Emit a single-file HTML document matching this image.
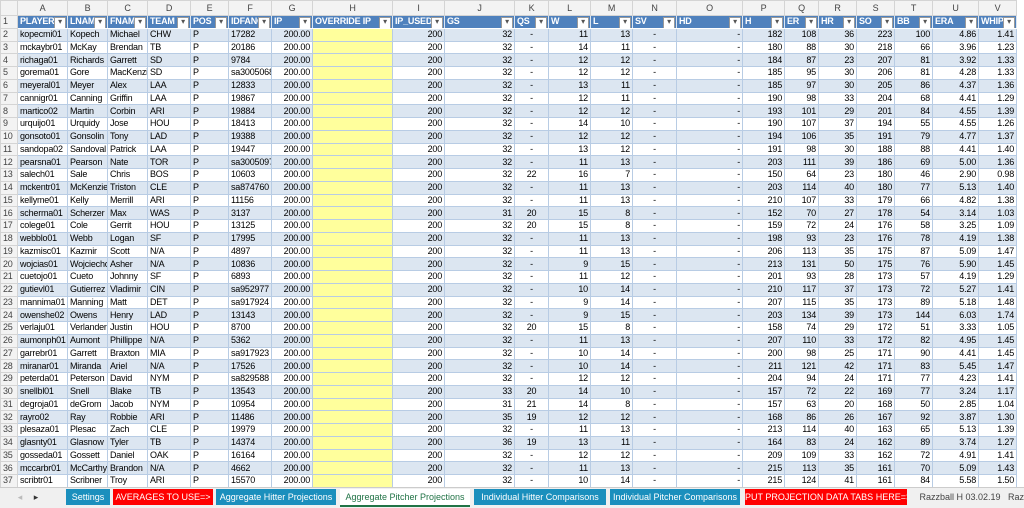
<!DOCTYPE html>
<html><head><meta charset="utf-8"><style>
*{margin:0;padding:0;box-sizing:border-box}
body{width:1024px;height:508px;overflow:hidden;background:#fff;font-family:"Liberation Sans",sans-serif;font-size:9px;color:#000;position:relative}
table{border-collapse:collapse;table-layout:fixed;position:absolute;left:0;top:0;width:1016px}
td,th{height:12.75px;border:1px solid #b8cce4;padding:0 2px;white-space:nowrap;overflow:hidden;line-height:11px;font-weight:normal;letter-spacing:-0.2px}
tr.c th,tr.c td{height:15px;background:#f3f3f3;border-color:#d4d4d4;text-align:center;color:#444}
th{background:#f3f3f3;border-color:#d4d4d4;text-align:left;color:#444;padding-left:2px}
tr.o td{background:#dce6f1}
tr td{background:#fff}
tr.o td{background:#dce6f1}
tr.c td{background:#f3f3f3!important}
tr.h td{background:#4f81bd!important;color:#fff;font-weight:bold;text-align:left;position:relative;border-color:#fff;border-right-color:#dce6f1}
tr.h td::after{content:"▾";position:absolute;right:1px;top:1px;width:10px;height:10px;background:#fff;color:#555;border:1px solid #999;font-size:8px;line-height:8px;text-align:center;font-weight:normal}
td:nth-child(n+8){text-align:right}
td:nth-child(9){background:#ffff9c!important}
tr.h td:nth-child(9){background:#4f81bd!important}
td:nth-child(12),td:nth-child(15){text-align:center}
#tabs{position:absolute;left:0;top:487px;width:1024px;height:21px;background:#f0f0f0;border-top:1px solid #ccc}
.t{position:absolute;top:1px;height:16px;color:#fff;font-size:9px;text-align:center;line-height:16px;white-space:nowrap;overflow:hidden}
.b{background:#1b8fbd}.r{background:#f00}
</style></head><body>
<table>
<colgroup><col style="width:17px"><col style="width:50px"><col style="width:40px"><col style="width:40px"><col style="width:43px"><col style="width:38px"><col style="width:43px"><col style="width:41px"><col style="width:80px"><col style="width:52px"><col style="width:70px"><col style="width:34px"><col style="width:42px"><col style="width:42px"><col style="width:44px"><col style="width:66px"><col style="width:42px"><col style="width:34px"><col style="width:38px"><col style="width:38px"><col style="width:38px"><col style="width:46px"><col style="width:38px"></colgroup>
<tr class="c"><th></th><td>A</td><td>B</td><td>C</td><td>D</td><td>E</td><td>F</td><td>G</td><td>H</td><td>I</td><td>J</td><td>K</td><td>L</td><td>M</td><td>N</td><td>O</td><td>P</td><td>Q</td><td>R</td><td>S</td><td>T</td><td>U</td><td>V</td></tr>
<tr class="h"><th>1</th><td>PLAYERID</td><td>LNAME</td><td>FNAME</td><td>TEAM</td><td>POS</td><td>IDFANG</td><td>IP</td><td>OVERRIDE IP</td><td>IP_USED</td><td>GS</td><td>QS</td><td>W</td><td>L</td><td>SV</td><td>HD</td><td>H</td><td>ER</td><td>HR</td><td>SO</td><td>BB</td><td>ERA</td><td>WHIP</td></tr>
<tr class="o"><th>2<td>kopecmi01<td>Kopech<td>Michael<td>CHW<td>P<td>17282<td>200.00<td><td>200<td>32<td>-<td>11<td>13<td>-<td>-<td>182<td>108<td>36<td>223<td>100<td>4.86<td>1.41</tr>
<tr><th>3<td>mckaybr01<td>McKay<td>Brendan<td>TB<td>P<td>20186<td>200.00<td><td>200<td>32<td>-<td>14<td>11<td>-<td>-<td>180<td>88<td>30<td>218<td>66<td>3.96<td>1.23</tr>
<tr class="o"><th>4<td>richaga01<td>Richards<td>Garrett<td>SD<td>P<td>9784<td>200.00<td><td>200<td>32<td>-<td>12<td>12<td>-<td>-<td>184<td>87<td>23<td>207<td>81<td>3.92<td>1.33</tr>
<tr><th>5<td>gorema01<td>Gore<td>MacKenzie<td>SD<td>P<td>sa3005068<td>200.00<td><td>200<td>32<td>-<td>12<td>12<td>-<td>-<td>185<td>95<td>30<td>206<td>81<td>4.28<td>1.33</tr>
<tr class="o"><th>6<td>meyeral01<td>Meyer<td>Alex<td>LAA<td>P<td>12833<td>200.00<td><td>200<td>32<td>-<td>13<td>11<td>-<td>-<td>185<td>97<td>30<td>205<td>86<td>4.37<td>1.36</tr>
<tr><th>7<td>cannigr01<td>Canning<td>Griffin<td>LAA<td>P<td>19867<td>200.00<td><td>200<td>32<td>-<td>12<td>11<td>-<td>-<td>190<td>98<td>33<td>204<td>68<td>4.41<td>1.29</tr>
<tr class="o"><th>8<td>martico02<td>Martin<td>Corbin<td>ARI<td>P<td>19884<td>200.00<td><td>200<td>32<td>-<td>12<td>12<td>-<td>-<td>193<td>101<td>29<td>201<td>84<td>4.55<td>1.39</tr>
<tr><th>9<td>urquijo01<td>Urquidy<td>Jose<td>HOU<td>P<td>18413<td>200.00<td><td>200<td>32<td>-<td>14<td>10<td>-<td>-<td>190<td>107<td>37<td>194<td>55<td>4.55<td>1.26</tr>
<tr class="o"><th>10<td>gonsoto01<td>Gonsolin<td>Tony<td>LAD<td>P<td>19388<td>200.00<td><td>200<td>32<td>-<td>12<td>12<td>-<td>-<td>194<td>106<td>35<td>191<td>79<td>4.77<td>1.37</tr>
<tr><th>11<td>sandopa02<td>Sandoval<td>Patrick<td>LAA<td>P<td>19447<td>200.00<td><td>200<td>32<td>-<td>13<td>12<td>-<td>-<td>191<td>98<td>30<td>188<td>88<td>4.41<td>1.40</tr>
<tr class="o"><th>12<td>pearsna01<td>Pearson<td>Nate<td>TOR<td>P<td>sa3005097<td>200.00<td><td>200<td>32<td>-<td>11<td>13<td>-<td>-<td>203<td>111<td>39<td>186<td>69<td>5.00<td>1.36</tr>
<tr><th>13<td>salech01<td>Sale<td>Chris<td>BOS<td>P<td>10603<td>200.00<td><td>200<td>32<td>22<td>16<td>7<td>-<td>-<td>150<td>64<td>23<td>180<td>46<td>2.90<td>0.98</tr>
<tr class="o"><th>14<td>mckentr01<td>McKenzie<td>Triston<td>CLE<td>P<td>sa874760<td>200.00<td><td>200<td>32<td>-<td>11<td>13<td>-<td>-<td>203<td>114<td>40<td>180<td>77<td>5.13<td>1.40</tr>
<tr><th>15<td>kellyme01<td>Kelly<td>Merrill<td>ARI<td>P<td>11156<td>200.00<td><td>200<td>32<td>-<td>11<td>13<td>-<td>-<td>210<td>107<td>33<td>179<td>66<td>4.82<td>1.38</tr>
<tr class="o"><th>16<td>scherma01<td>Scherzer<td>Max<td>WAS<td>P<td>3137<td>200.00<td><td>200<td>31<td>20<td>15<td>8<td>-<td>-<td>152<td>70<td>27<td>178<td>54<td>3.14<td>1.03</tr>
<tr><th>17<td>colege01<td>Cole<td>Gerrit<td>HOU<td>P<td>13125<td>200.00<td><td>200<td>32<td>20<td>15<td>8<td>-<td>-<td>159<td>72<td>24<td>176<td>58<td>3.25<td>1.09</tr>
<tr class="o"><th>18<td>webblo01<td>Webb<td>Logan<td>SF<td>P<td>17995<td>200.00<td><td>200<td>32<td>-<td>11<td>13<td>-<td>-<td>198<td>93<td>23<td>176<td>78<td>4.19<td>1.38</tr>
<tr><th>19<td>kazmisc01<td>Kazmir<td>Scott<td>N/A<td>P<td>4897<td>200.00<td><td>200<td>32<td>-<td>11<td>13<td>-<td>-<td>206<td>113<td>35<td>175<td>87<td>5.09<td>1.47</tr>
<tr class="o"><th>20<td>wojcias01<td>Wojciechowski<td>Asher<td>N/A<td>P<td>10836<td>200.00<td><td>200<td>32<td>-<td>9<td>15<td>-<td>-<td>213<td>131<td>50<td>175<td>76<td>5.90<td>1.45</tr>
<tr><th>21<td>cuetojo01<td>Cueto<td>Johnny<td>SF<td>P<td>6893<td>200.00<td><td>200<td>32<td>-<td>11<td>12<td>-<td>-<td>201<td>93<td>28<td>173<td>57<td>4.19<td>1.29</tr>
<tr class="o"><th>22<td>gutievl01<td>Gutierrez<td>Vladimir<td>CIN<td>P<td>sa952977<td>200.00<td><td>200<td>32<td>-<td>10<td>14<td>-<td>-<td>210<td>117<td>37<td>173<td>72<td>5.27<td>1.41</tr>
<tr><th>23<td>mannima01<td>Manning<td>Matt<td>DET<td>P<td>sa917924<td>200.00<td><td>200<td>32<td>-<td>9<td>14<td>-<td>-<td>207<td>115<td>35<td>173<td>89<td>5.18<td>1.48</tr>
<tr class="o"><th>24<td>owenshe02<td>Owens<td>Henry<td>LAD<td>P<td>13143<td>200.00<td><td>200<td>32<td>-<td>9<td>15<td>-<td>-<td>203<td>134<td>39<td>173<td>144<td>6.03<td>1.74</tr>
<tr><th>25<td>verlaju01<td>Verlander<td>Justin<td>HOU<td>P<td>8700<td>200.00<td><td>200<td>32<td>20<td>15<td>8<td>-<td>-<td>158<td>74<td>29<td>172<td>51<td>3.33<td>1.05</tr>
<tr class="o"><th>26<td>aumonph01<td>Aumont<td>Phillippe<td>N/A<td>P<td>5362<td>200.00<td><td>200<td>32<td>-<td>11<td>13<td>-<td>-<td>207<td>110<td>33<td>172<td>82<td>4.95<td>1.45</tr>
<tr><th>27<td>garrebr01<td>Garrett<td>Braxton<td>MIA<td>P<td>sa917923<td>200.00<td><td>200<td>32<td>-<td>10<td>14<td>-<td>-<td>200<td>98<td>25<td>171<td>90<td>4.41<td>1.45</tr>
<tr class="o"><th>28<td>miranar01<td>Miranda<td>Ariel<td>N/A<td>P<td>17526<td>200.00<td><td>200<td>32<td>-<td>10<td>14<td>-<td>-<td>211<td>121<td>42<td>171<td>83<td>5.45<td>1.47</tr>
<tr><th>29<td>peterda01<td>Peterson<td>David<td>NYM<td>P<td>sa829588<td>200.00<td><td>200<td>32<td>-<td>12<td>12<td>-<td>-<td>204<td>94<td>24<td>171<td>77<td>4.23<td>1.41</tr>
<tr class="o"><th>30<td>snellbl01<td>Snell<td>Blake<td>TB<td>P<td>13543<td>200.00<td><td>200<td>33<td>20<td>14<td>10<td>-<td>-<td>157<td>72<td>22<td>169<td>77<td>3.24<td>1.17</tr>
<tr><th>31<td>degroja01<td>deGrom<td>Jacob<td>NYM<td>P<td>10954<td>200.00<td><td>200<td>31<td>21<td>14<td>8<td>-<td>-<td>157<td>63<td>20<td>168<td>50<td>2.85<td>1.04</tr>
<tr class="o"><th>32<td>rayro02<td>Ray<td>Robbie<td>ARI<td>P<td>11486<td>200.00<td><td>200<td>35<td>19<td>12<td>12<td>-<td>-<td>168<td>86<td>26<td>167<td>92<td>3.87<td>1.30</tr>
<tr><th>33<td>plesaza01<td>Plesac<td>Zach<td>CLE<td>P<td>19979<td>200.00<td><td>200<td>32<td>-<td>11<td>13<td>-<td>-<td>213<td>114<td>40<td>163<td>65<td>5.13<td>1.39</tr>
<tr class="o"><th>34<td>glasnty01<td>Glasnow<td>Tyler<td>TB<td>P<td>14374<td>200.00<td><td>200<td>36<td>19<td>13<td>11<td>-<td>-<td>164<td>83<td>24<td>162<td>89<td>3.74<td>1.27</tr>
<tr><th>35<td>gosseda01<td>Gossett<td>Daniel<td>OAK<td>P<td>16164<td>200.00<td><td>200<td>32<td>-<td>12<td>12<td>-<td>-<td>209<td>109<td>33<td>162<td>72<td>4.91<td>1.41</tr>
<tr class="o"><th>36<td>mccarbr01<td>McCarthy<td>Brandon<td>N/A<td>P<td>4662<td>200.00<td><td>200<td>32<td>-<td>11<td>13<td>-<td>-<td>215<td>113<td>35<td>161<td>70<td>5.09<td>1.43</tr>
<tr><th>37<td>scribtr01<td>Scribner<td>Troy<td>ARI<td>P<td>15570<td>200.00<td><td>200<td>32<td>-<td>10<td>14<td>-<td>-<td>215<td>124<td>41<td>161<td>84<td>5.58<td>1.50</tr>
</table>
<div id="tabs">
<div class="t" style="left:14px;width:12px;color:#bbb">◂</div>
<div class="t" style="left:30px;width:12px;color:#333">▸</div>
<div class="t b" style="left:66px;width:44px">Settings</div>
<div class="t r" style="left:113px;width:100px">AVERAGES TO USE=&gt;</div>
<div class="t b" style="left:216px;width:120px">Aggregate Hitter Projections</div>
<div class="t" style="left:340px;width:130px;background:#fff;color:#217346;border-bottom:2px solid #217346;height:18px">Aggregate Pitcher Projections</div>
<div class="t b" style="left:474px;width:132px">Individual Hitter Comparisons</div>
<div class="t b" style="left:610px;width:130px">Individual Pitcher Comparisons</div>
<div class="t r" style="left:745px;width:162px">PUT PROJECTION DATA TABS HERE=&gt;</div>
<div class="t" style="left:912px;width:96px;color:#444">Razzball H 03.02.19</div>
<div class="t" style="left:1008px;width:16px;color:#444;text-align:left">Raz</div>
</div>
</body></html>
